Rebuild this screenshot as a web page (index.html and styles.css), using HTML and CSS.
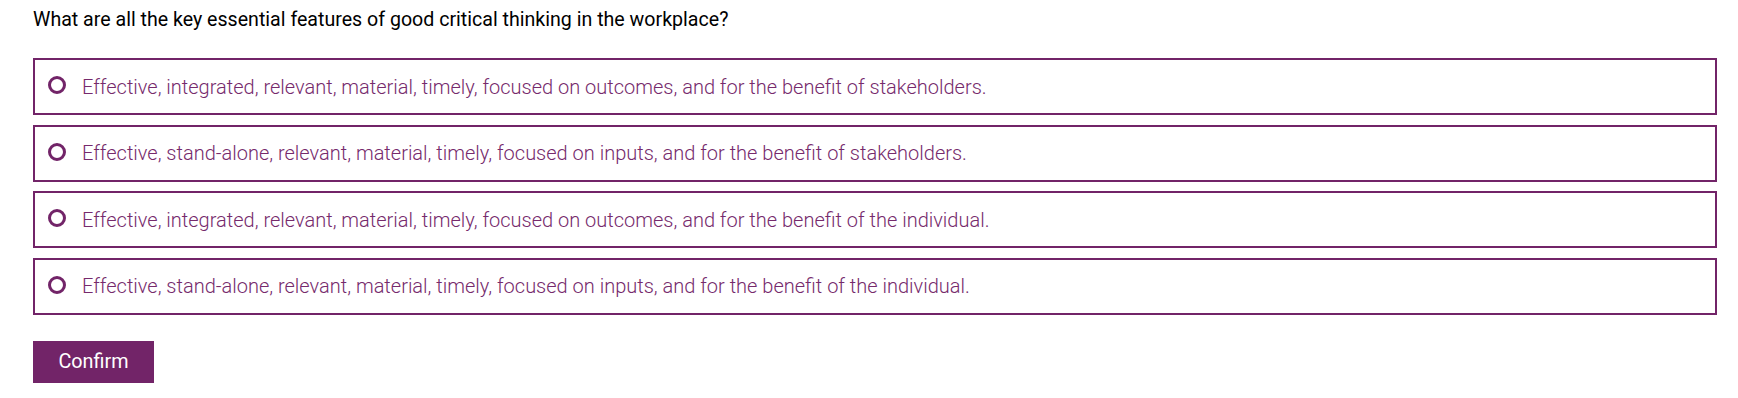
FILE: index.html
```html
<!DOCTYPE html>
<html lang="en">
<head>
	<meta charset="UTF-8">
	<title>Question</title>
	<link rel="stylesheet" href="styles.css">
</head>
<body>
	<div class="quiz">
		<p class="question">What are all the key essential features of good critical thinking in the workplace?</p>
		<div class="options">
			<label class="option"><span class="radio"></span>Effective, integrated, relevant, material, timely, focused on outcomes, and for the benefit of stakeholders.</label>
			<label class="option"><span class="radio"></span>Effective, stand-alone, relevant, material, timely, focused on inputs, and for the benefit of stakeholders.</label>
			<label class="option"><span class="radio"></span>Effective, integrated, relevant, material, timely, focused on outcomes, and for the benefit of the individual.</label>
			<label class="option"><span class="radio"></span>Effective, stand-alone, relevant, material, timely, focused on inputs, and for the benefit of the individual.</label>
		</div>
		<button class="confirm">Confirm</button>
	</div>
</body>
</html>
```

FILE: styles.css
```css
body{
	margin: 0;
	background: #fff;
	font-family: Roboto, "Liberation Sans", sans-serif;
}
.quiz{
	padding: 7px 21px 0 33px;
}
.question{
	margin: 0;
	font-size: 19.6px;
	line-height: 26px;
	color: #000;
}
.options{
	margin-top: 25px;
	display: flex;
	flex-direction: column;
	gap: 9.67px;
}
.option{
	height: 57px;
	box-sizing: border-box;
	border: 2px solid #722468;
	display: flex;
	align-items: center;
	padding-left: 13px;
	font-size: 20px;
	font-weight: 300;
	color: #762a6c;
}
/* fake radio, just a ring */
.radio{
	width: 18px;
	height: 18px;
	box-sizing: border-box;
	border: 3px solid #722468;
	border-radius: 50%;
	margin-right: 16px;
	margin-top: -3px;
}
.confirm{
	margin-top: 26px;
	width: 121px;
	height: 42px;
	border: none;
	background: #722468;
	color: #fff;
	font-family: Roboto, "Liberation Sans", sans-serif;
	font-size: 19.8px;
	padding: 0;
}
```
